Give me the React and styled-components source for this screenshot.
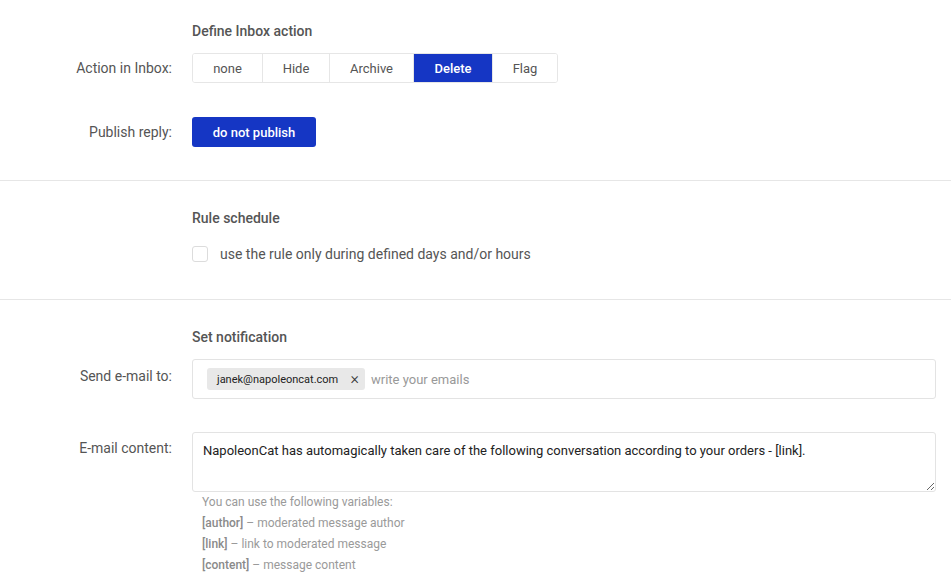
import React from "react";
import styled, { createGlobalStyle } from "styled-components";

const Global = createGlobalStyle`
  html, body { margin: 0; padding: 0; background: #fff; }
  body { font-family: Roboto, "Noto Sans", Arial, sans-serif; color: #555; -webkit-font-smoothing: antialiased; }
`;

const BLUE = "#1536c4";

const Section = styled.section`
  display: grid;
  grid-template-columns: 172px 1fr;
  column-gap: 20px;
  row-gap: ${(p) => p.$rowGap || 13}px;
  padding: ${(p) => p.$top}px 15px ${(p) => p.$bottom}px 0;
  border-bottom: ${(p) => (p.$last ? "none" : "1px solid #e6e6e6")};
`;

const Title = styled.h3`
  grid-column: 2;
  margin: 0;
  font-size: 14px;
  line-height: 18px;
  font-weight: 500;
  color: #555;
`;

const Label = styled.div`
  grid-column: 1;
  text-align: right;
  font-size: 14px;
  line-height: 18px;
  color: #555;
  align-self: ${(p) => (p.$top ? "start" : "center")};
  padding-top: ${(p) => p.$pad || 0}px;
`;

const Field = styled.div`
  grid-column: 2;
  display: flex;
  align-items: center;
`;

const Segmented = styled.div`
  display: flex;
  border: 1px solid #e6e6e6;
  border-radius: 3px;
  height: 28px;
  overflow: hidden;
`;

const Seg = styled.button`
  box-sizing: border-box;
  width: ${(p) => p.$w}px;
  border: none;
  border-left: ${(p) => (p.$first ? "none" : "1px solid #e6e6e6")};
  background: ${(p) => (p.$active ? BLUE : "#fff")};
  color: ${(p) => (p.$active ? "#fff" : "#555")};
  font-family: inherit;
  font-size: 13px;
  font-weight: ${(p) => (p.$active ? 500 : 400)};
  padding: 0;
  cursor: pointer;
`;

const Primary = styled.button`
  width: 124px;
  height: 30px;
  border: none;
  border-radius: 3px;
  background: ${BLUE};
  color: #fff;
  font-family: inherit;
  font-size: 13px;
  font-weight: 500;
`;

const CheckRow = styled.label`
  display: flex;
  align-items: center;
  gap: 12px;
  height: 20px;
  font-size: 14px;
  color: #555;
`;

const Box = styled.span`
  width: 14px;
  height: 14px;
  border: 1px solid #dcdcdc;
  border-radius: 3px;
  background: #fff;
`;

const TagInput = styled.div`
  flex: 1;
  height: 38px;
  border: 1px solid #e3e3e3;
  border-radius: 3px;
  display: flex;
  align-items: center;
  padding-left: 14px;
  gap: 6px;
`;

const Tag = styled.span`
  box-sizing: border-box;
  display: inline-flex;
  align-items: center;
  justify-content: space-between;
  width: 158px;
  height: 22px;
  padding: 0 6px 0 10px;
  background: #e8e8e8;
  border-radius: 3px;
  font-size: 11px;
  color: #222;
`;

const Close = styled.span`
  font-size: 16px;
  font-weight: 300;
  color: #333;
  line-height: 1;
`;

const Placeholder = styled.span`
  font-size: 13px;
  color: #999;
`;

const Stack = styled.div`
  grid-column: 2;
  display: flex;
  flex-direction: column;
  margin-top: 20px;
`;

const Area = styled.textarea`
  box-sizing: border-box;
  width: 100%;
  height: 60px;
  border: 1px solid #e3e3e3;
  border-radius: 3px;
  padding: 9px 10px;
  font-family: inherit;
  font-size: 13px;
  line-height: 18px;
  color: #222;
  outline: none;
  display: block;
`;

const Help = styled.div`
  padding-left: 10px;
  font-size: 12px;
  line-height: 21px;
  color: #9a9a9a;
`;

const Var = styled.b`
  font-weight: 500;
  color: #8a8a8a;
`;

const segs = [
  ["none", 69],
  ["Hide", 67],
  ["Archive", 84],
  ["Delete", 79],
  ["Flag", 65],
];

export default function App() {
  return (
    <>
      <Global />
      <Section $top={22} $bottom={33} $rowGap={13}>
        <Title>Define Inbox action</Title>
        <Label>Action in Inbox:</Label>
        <Field>
          <Segmented>
            {segs.map(([t, w], i) => (
              <Seg key={t} $w={w} $first={i === 0} $active={t === "Delete"}>
                {t}
              </Seg>
            ))}
          </Segmented>
        </Field>
        <Label style={{ marginTop: 21 }}>Publish reply:</Label>
        <Field style={{ marginTop: 21 }}>
          <Primary>do not publish</Primary>
        </Field>
      </Section>

      <Section $top={28} $bottom={35} $rowGap={17}>
        <Title>Rule schedule</Title>
        <Field>
          <CheckRow>
            <Box />
            use the rule only during defined days and/or hours
          </CheckRow>
        </Field>
      </Section>

      <Section $top={28} $bottom={20} $rowGap={13} $last>
        <Title>Set notification</Title>
        <Label $top $pad={8}>Send e-mail to:</Label>
        <Field>
          <TagInput>
            <Tag>
              janek@napoleoncat.com <Close>×</Close>
            </Tag>
            <Placeholder>write your emails</Placeholder>
          </TagInput>
        </Field>
        <Label $top $pad={27}>E-mail content:</Label>
        <Stack>
          <Area defaultValue="NapoleonCat has automagically taken care of the following conversation according to your orders - [link]." />
          <Help>
            <div>You can use the following variables:</div>
            <div><Var>[author]</Var> – moderated message author</div>
            <div><Var>[link]</Var> – link to moderated message</div>
            <div><Var>[content]</Var> – message content</div>
          </Help>
        </Stack>
      </Section>
    </>
  );
}
